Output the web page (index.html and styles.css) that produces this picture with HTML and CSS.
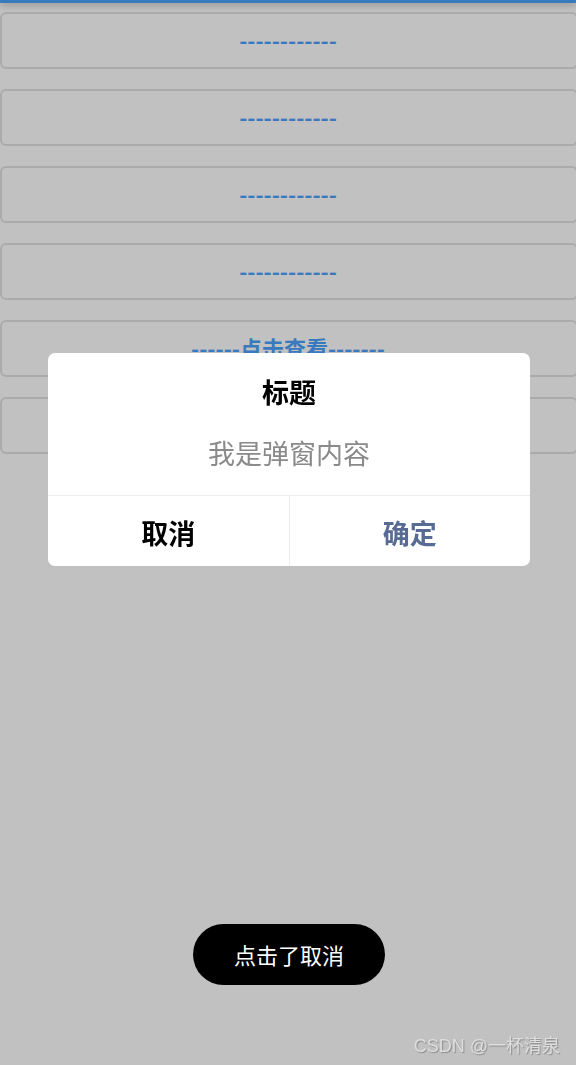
FILE: index.html
```html
<!DOCTYPE html>
<html lang="zh-CN">
<head>
<meta charset="utf-8">
<title>弹窗</title>
<link rel="stylesheet" href="styles.css">
</head>
<body>
<div class="page">
  <div class="topbar"></div>
  <div class="list">
    <div class="item">------------</div>
    <div class="item">------------</div>
    <div class="item">------------</div>
    <div class="item">------------</div>
    <div class="item">------点击查看-------</div>
    <div class="item">------------</div>
  </div>
</div>
<div class="mask"></div>
<div class="modal">
  <div class="modal-title">标题</div>
  <div class="modal-content">我是弹窗内容</div>
  <div class="modal-footer">
    <div class="modal-btn cancel">取消</div>
    <div class="modal-btn confirm">确定</div>
  </div>
</div>
<div class="toast">点击了取消</div>
<div class="watermark">CSDN @一杯清泉</div>
</body>
</html>
```
FILE: styles.css
```css
html, body {
  margin: 0;
  padding: 0;
  width: 576px;
  height: 1065px;
  overflow: hidden;
  background: #ffffff;
  font-family: "Noto Sans CJK SC", "Noto Sans", sans-serif;
}
.page {
  width: 576px;
}
.topbar {
  height: 3px;
  background: #4ca2fd;
  box-shadow: 0 2px 6px rgba(0, 0, 0, 0.35);
}
.list {
  display: flex;
  flex-direction: column;
  gap: 20px;
  padding-top: 9px;
}
.item {
  box-sizing: border-box;
  width: 578px;
  height: 57px;
  border: 2px solid #e2e2e2;
  border-radius: 6px;
  display: flex;
  align-items: center;
  justify-content: center;
  padding-right: 2px;
  padding-bottom: 4px;
  color: #4ca2fd;
  font-size: 22px;
  font-weight: 700;
}
.mask {
  position: fixed;
  inset: 0;
  background: rgba(0, 0, 0, 0.243);
}
.modal {
  position: absolute;
  left: 48px;
  top: 353px;
  width: 482px;
  background: #ffffff;
  border-radius: 7px;
  overflow: hidden;
  text-align: center;
}
.modal-title {
  padding-top: 20px;
  line-height: 38px;
  font-size: 27px;
  font-weight: 700;
  color: #000000;
}
.modal-content {
  margin-top: 22px;
  padding-bottom: 22px;
  line-height: 40px;
  font-size: 27px;
  color: #8a8a8a;
}
.modal-footer {
  display: flex;
  border-top: 1px solid #ececec;
  height: 70px;
}
.modal-btn {
  flex: 1;
  display: flex;
  align-items: center;
  justify-content: center;
  font-size: 27px;
  font-weight: 700;
  padding-top: 2px;
}
.cancel {
  color: #000000;
  border-right: 1px solid #ececec;
}
.confirm {
  color: #576b95;
}
.toast {
  position: absolute;
  left: 193px;
  top: 924px;
  width: 192px;
  height: 61px;
  border-radius: 31px;
  background: #000000;
  color: #ffffff;
  font-size: 22px;
  line-height: 61px;
  text-align: center;
}
.watermark {
  position: absolute;
  right: 16px;
  top: 1034px;
  font-family: "Liberation Sans", "Noto Sans CJK SC", sans-serif;
  font-size: 18px;
  line-height: 24px;
  color: #dedede;
  text-shadow: 1px 1px 1px #8c8c8c;
}
```
